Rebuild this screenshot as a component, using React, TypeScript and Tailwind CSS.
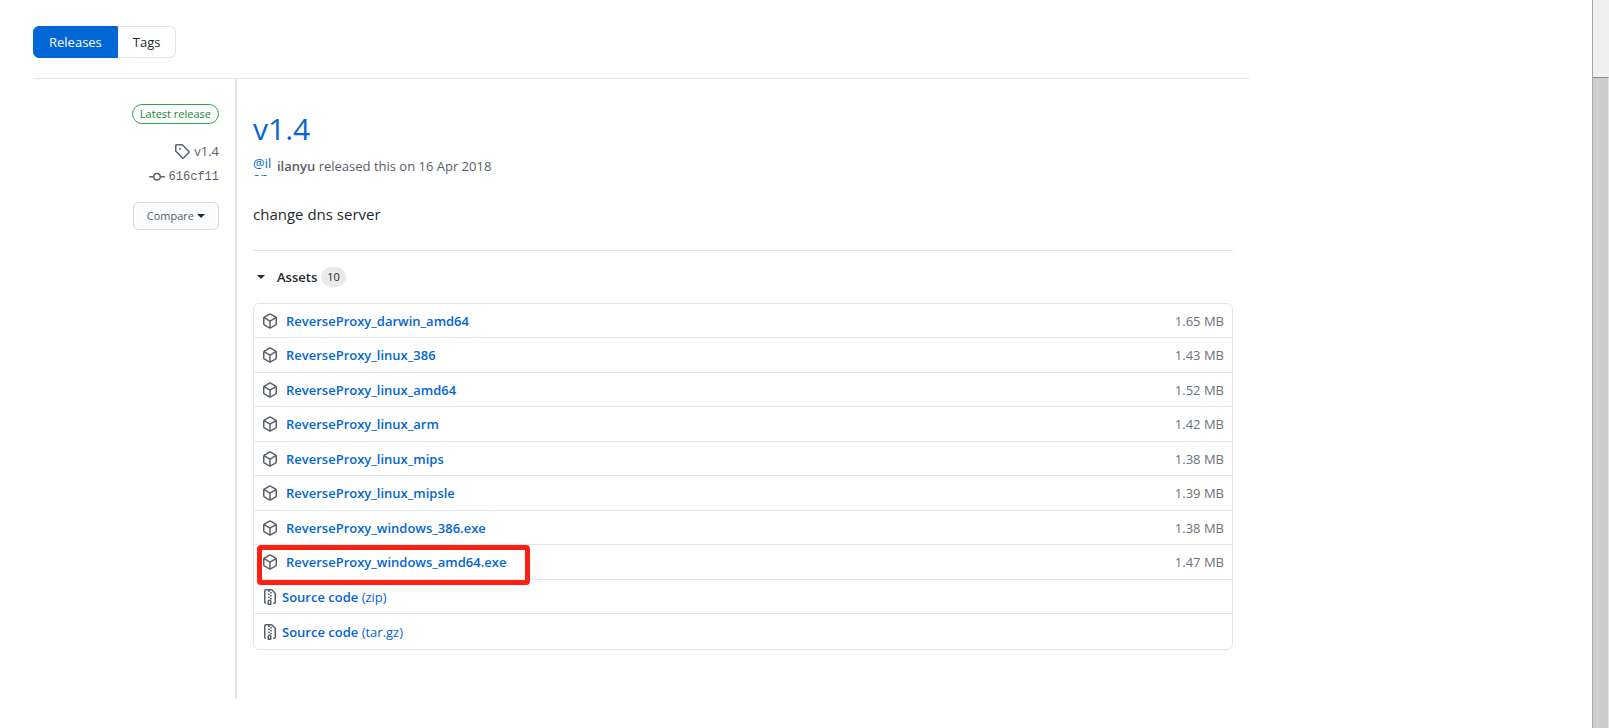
import React, { useState } from 'react';
import clsx from 'clsx';

interface Asset {
  name: string;
  size?: string;
  format?: string;
  marked?: boolean;
}

const assets: Asset[] = [
  { name: 'ReverseProxy_darwin_amd64', size: '1.65 MB' },
  { name: 'ReverseProxy_linux_386', size: '1.43 MB' },
  { name: 'ReverseProxy_linux_amd64', size: '1.52 MB' },
  { name: 'ReverseProxy_linux_arm', size: '1.42 MB' },
  { name: 'ReverseProxy_linux_mips', size: '1.38 MB' },
  { name: 'ReverseProxy_linux_mipsle', size: '1.39 MB' },
  { name: 'ReverseProxy_windows_386.exe', size: '1.38 MB' },
  { name: 'ReverseProxy_windows_amd64.exe', size: '1.47 MB', marked: true },
  { name: 'Source code', format: '(zip)' },
  { name: 'Source code', format: '(tar.gz)' },
];

const icons = {
  tag: 'M2.5 7.775V2.75a.25.25 0 01.25-.25h5.025a.25.25 0 01.177.073l6.25 6.25a.25.25 0 010 .354l-5.025 5.025a.25.25 0 01-.354 0l-6.25-6.25a.25.25 0 01-.073-.177zm-1.5 0V2.75C1 1.784 1.784 1 2.75 1h5.025c.464 0 .91.184 1.238.513l6.25 6.25a1.75 1.75 0 010 2.474l-5.026 5.026a1.75 1.75 0 01-2.474 0l-6.25-6.25A1.75 1.75 0 011 7.775zM6 5a1 1 0 100 2 1 1 0 000-2z',
  commit: 'M10.5 7.75a2.5 2.5 0 11-5 0 2.5 2.5 0 015 0zm1.43.75a4.002 4.002 0 01-7.86 0H.75a.75.75 0 110-1.5h3.32a4.001 4.001 0 017.86 0h3.32a.75.75 0 110 1.5h-3.32z',
  package: 'M8.878.392a1.75 1.75 0 00-1.756 0l-5.25 3.045A1.75 1.75 0 001 4.951v6.098c0 .624.332 1.2.872 1.514l5.25 3.045a1.75 1.75 0 001.756 0l5.25-3.045c.54-.313.872-.89.872-1.514V4.951c0-.624-.332-1.2-.872-1.514L8.878.392zM7.875 1.69a.25.25 0 01.25 0l4.63 2.685L8 7.133 3.245 4.375l4.63-2.685zM2.5 5.677v5.372c0 .09.047.171.125.216l4.625 2.683V8.432L2.5 5.677zm6.25 8.271l4.625-2.683a.25.25 0 00.125-.216V5.677L8.75 8.432v5.516z',
  zip: 'M3.5 1.75a.25.25 0 01.25-.25h3a.75.75 0 000 1.5h.5a.75.75 0 000-1.5h2.086a.25.25 0 01.177.073l2.914 2.914a.25.25 0 01.073.177v8.586a.25.25 0 01-.25.25h-.5a.75.75 0 000 1.5h.5A1.75 1.75 0 0014 13.25V4.664c0-.464-.184-.909-.513-1.237L10.573.513A1.75 1.75 0 009.336 0H3.75A1.75 1.75 0 002 1.75v11.5c0 .649.353 1.214.874 1.515a.75.75 0 10.752-1.298.25.25 0 01-.126-.217V1.75zM8.75 3a.75.75 0 000 1.5h.5a.75.75 0 000-1.5h-.5zM6 5.25a.75.75 0 01.75-.75h.5a.75.75 0 010 1.5h-.5A.75.75 0 016 5.25zm2 1.5A.75.75 0 018.75 6h.5a.75.75 0 010 1.5h-.5A.75.75 0 018 6.75zm-1.25.75a.75.75 0 000 1.5h.5a.75.75 0 000-1.5h-.5zM8 9.75A.75.75 0 018.75 9h.5a.75.75 0 010 1.5h-.5A.75.75 0 018 9.75zm-.75.75a1.75 1.75 0 00-1.75 1.75v3c0 .414.336.75.75.75h2.5a.75.75 0 00.75-.75v-3a1.75 1.75 0 00-1.75-1.75h-.5zm-.25 1.75a.25.25 0 01.25-.25h.5a.25.25 0 01.25.25v2.25h-1v-2.25z',
};

const Icon: React.FC<{ name: keyof typeof icons }> = ({ name }) => (
  <svg viewBox="0 0 16 16" className="w-4 h-4 shrink-0 fill-[#586069]" aria-hidden="true">
    <path fillRule="evenodd" d={icons[name]} />
  </svg>
);

const Caret: React.FC = () => (
  <svg viewBox="0 0 8 4" className="w-2 h-1 shrink-0 fill-[#24292e]" aria-hidden="true">
    <path d="M0 0h8L4 4z" />
  </svg>
);

const AssetRow: React.FC<{ asset: Asset }> = ({ asset }) => (
  <li className="relative flex items-center justify-between px-2 h-[34px] even:h-[35px] last:h-[34px] border-b border-[#e1e4e8] last:border-b-0">
    <a href="#" className={clsx('flex items-center text-[#0366d6]', asset.format ? 'gap-1' : 'gap-2')}>
      <Icon name={asset.format ? 'zip' : 'package'} />
      <span>
        <span className="font-semibold">{asset.name}</span>
        {asset.format && ` ${asset.format}`}
      </span>
    </a>
    {asset.size && <span className="text-[#6a737d]">{asset.size}</span>}
    {asset.marked && (
      <span className="absolute z-10 top-0 left-[3px] w-[273px] h-10 border-5 border-[#ff1e10] rounded-sm pointer-events-none" />
    )}
  </li>
);

const Sidebar: React.FC = () => (
  <aside className="w-[202px] shrink-0 flex flex-col items-end pt-[25px] pr-4 text-[#586069]">
    <a href="#" className="px-[7px] h-5 border border-[#28a745] rounded-full text-[11px] leading-[18px] text-[#22863a]">
      Latest release
    </a>
    <a href="#" className="mt-[17px] h-5 flex items-center gap-1">
      <Icon name="tag" />v1.4
    </a>
    <a href="#" className="mt-[6px] h-5 flex items-center gap-1 font-['Liberation_Mono',monospace] text-[12px]">
      <Icon name="commit" />616cf11
    </a>
    <button type="button" className="mt-[15px] h-7 px-[13px] flex items-center gap-[3px] border border-[#d9dbdd] rounded-md bg-[#fafbfc] text-[11px]">
      Compare <Caret />
    </button>
  </aside>
);

const App: React.FC = () => {
  const [tab, setTab] = useState('Releases');
  const [open, setOpen] = useState(true);

  return (
    <div className="min-h-screen flex bg-white text-[13px] leading-5 text-[#24292e] font-['Open_Sans',sans-serif]">
      <div className="flex-1">
        <div className="max-w-[1282px] px-[33px] pt-[26px]">
          <nav className="flex h-8">
            {['Releases', 'Tags'].map((t) => (
              <button
                key={t}
                type="button"
                onClick={() => setTab(t)}
                className={clsx(
                  'px-[15px] border first:rounded-l-md last:rounded-r-md last:border-l-0',
                  tab === t ? 'bg-[#0366d6] border-[#0366d6] text-white' : 'border-[#e1e4e8]'
                )}
              >
                {t}
              </button>
            ))}
          </nav>

          <div className="mt-5 flex border-t border-[#e1e4e8]">
            <Sidebar />
            <main className="flex-1 border-l-2 border-[#e1e4e8] pl-4 pr-4 pb-12 pt-[30px]">
              <h1 className="text-[30px] leading-10 text-[#0366d6]">
                <a href="#">v1.4</a>
              </h1>
              <p className="mt-[5px] h-6 flex items-center text-[#586069]">
                <a href="#" className="w-5 h-5 mr-1 overflow-hidden break-all leading-[14px] text-[#0366d6]">@ilanyu</a>
                <span><a href="#" className="font-semibold">ilanyu</a> released this on 16 Apr 2018</span>
              </p>
              <p className="mt-6 text-[15px] leading-6">change dns server</p>

              <section className="mt-6 pt-4 border-t border-[#e1e4e8]">
                <button type="button" onClick={() => setOpen(!open)} className="h-5 pl-1 flex items-center font-semibold">
                  <Caret />
                  <span className="ml-3">Assets</span>
                  <span className="ml-1 px-[6px] rounded-full bg-[#e8eaec] text-[11px] font-medium">10</span>
                </button>
                {open && (
                  <ul className="mt-4 border border-[#e1e4e8] rounded-md">
                    {assets.map((a, i) => (
                      <AssetRow key={i} asset={a} />
                    ))}
                  </ul>
                )}
              </section>
            </main>
          </div>
        </div>
      </div>

      {/* scroll track */}
      <div className="w-[17px] shrink-0 flex flex-col border-l border-[#a8a8a8]">
        <div className="h-[77px] bg-[#f0f0f0]" />
        <div className="flex-1 border-t border-t-[#8c8c8c] border-r border-r-[#e3e3e3] bg-[#cdcdcd]" />
      </div>
    </div>
  );
};

export default App;
